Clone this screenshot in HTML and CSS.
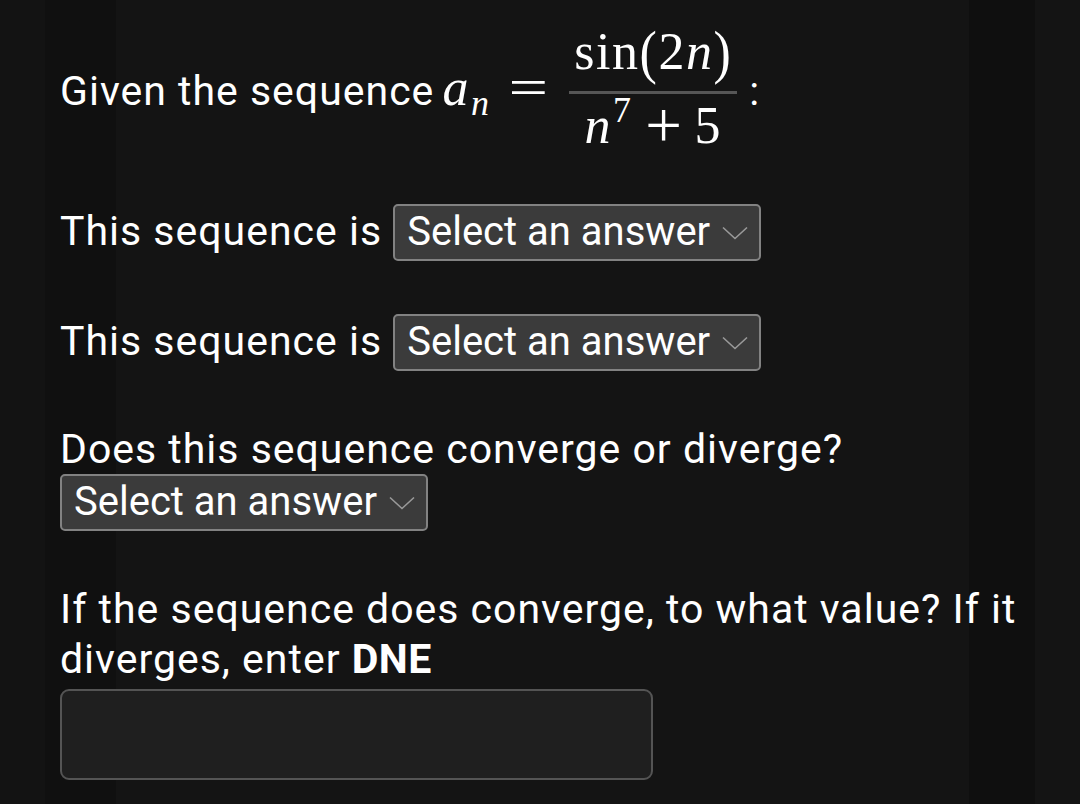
FILE: index.html
```html
<!DOCTYPE html>
<html lang="en">
<head>
<meta charset="utf-8">
<title>Sequence question</title>
<link rel="stylesheet" href="styles.css">
</head>
<body>
<main class="page">
  <p class="q q-first">Given the sequence <span class="math"><span class="mi">a</span><span class="sub"><span class="mi">n</span></span><span class="mo rel">=</span><span class="frac"><span class="num"><span class="mrm">sin</span><span class="paren">(</span>2<span class="mi">n</span><span class="paren">)</span></span><span class="bar"></span><span class="den"><span class="mi">n</span><span class="sup">7</span><span class="mo bin">+</span>5</span></span></span><span class="colon">:</span></p>

  <p class="q">This sequence is <span class="select"><span class="select-text">Select an answer</span><svg class="chev" viewBox="0 0 26 14" width="26" height="14" aria-hidden="true"><polyline points="1,1.5 13,12.5 25,1.5" fill="none" stroke="#9a9a9a" stroke-width="1.6"/></svg></span></p>

  <p class="q">This sequence is <span class="select"><span class="select-text">Select an answer</span><svg class="chev" viewBox="0 0 26 14" width="26" height="14" aria-hidden="true"><polyline points="1,1.5 13,12.5 25,1.5" fill="none" stroke="#9a9a9a" stroke-width="1.6"/></svg></span></p>

  <p class="q">Does this sequence converge or diverge?<br><span class="select"><span class="select-text">Select an answer</span><svg class="chev" viewBox="0 0 26 14" width="26" height="14" aria-hidden="true"><polyline points="1,1.5 13,12.5 25,1.5" fill="none" stroke="#9a9a9a" stroke-width="1.6"/></svg></span></p>

  <div class="q q-last">
    <p class="q-text">If the sequence does converge, to what value? If it diverges, enter <strong class="dne">DNE</strong></p>
    <div class="answer-input"></div>
  </div>
</main>
</body>
</html>
```
FILE: styles.css
```css
html, body {
  margin: 0;
  padding: 0;
}

body {
  width: 1080px;
  min-height: 804px;
  background: linear-gradient(to right,
    #131313 0, #131313 45px,
    #101010 45px, #101010 116px,
    #141414 116px, #141414 969px,
    #0f0f0f 969px, #0f0f0f 1035px,
    #141414 1035px, #141414 100%);
  color: #ffffff;
  font-family: Roboto, "Liberation Sans", Arial, sans-serif;
  font-size: 41px;
  letter-spacing: 1px;
  line-height: 50px;
  overflow: hidden;
}

.page {
  padding: 27px 30px 0 60px;
}

.q {
  margin: 0 0 53px 0;
}

.q-text {
  margin: 0;
}

.dne {
  font-weight: 700;
  letter-spacing: 0.5px;
}

/* ---------- math ---------- */
.math {
  font-family: "Liberation Serif", "Times New Roman", serif;
  font-size: 52px;
  line-height: 50px;
  letter-spacing: 1.5px;
  white-space: nowrap;
  margin-left: -3px;
}

.mi {
  font-style: italic;
}

.mrm {
  font-style: normal;
}

.sub {
  font-size: 36px;
  line-height: 0;
  vertical-align: -10px;
  margin-left: 1px;
}

.sup {
  font-size: 36px;
  line-height: 0;
  vertical-align: 21px;
  margin-left: 1px;
}

.mo {
  display: inline-block;
  line-height: 50px;
}

.mo.rel {
  transform: scaleX(1.35);
  margin: 0 21px 0 23px;
}

.mo.bin {
  transform: scale(1.25);
  margin: 0 15px 0 16px;
}

.paren {
  display: inline-block;
  transform: scaleY(1.15);
}

.frac {
  display: inline-flex;
  flex-direction: column;
  align-items: center;
  vertical-align: 36px;
  margin: 0 6px 0 4px;
}

.num {
  padding: 0 5px 14px;
}

.bar {
  align-self: stretch;
  height: 3px;
  background: #565656;
}

.den {
  padding: 7px 5px 0;
}

.colon {
  margin-left: 6px;
}

/* ---------- selects ---------- */
.select {
  display: inline-flex;
  align-items: flex-start;
  box-sizing: border-box;
  height: 57px;
  padding: 6px 11px 7px 12px;
  border: 2px solid #828282;
  border-radius: 5px;
  background: #3b3b3b;
  column-gap: 12px;
  vertical-align: baseline;
  letter-spacing: 0;
}

.select-text {
  font-size: 40px;
  line-height: 40px;
  letter-spacing: 0;
  color: #ffffff;
}

.chev {
  display: block;
  margin-top: 14px;
}

/* ---------- input ---------- */
.answer-input {
  box-sizing: border-box;
  width: 593px;
  height: 91px;
  margin-top: 5px;
  border: 2px solid #545454;
  border-radius: 9px;
  background: #1f1f1f;
}
```
